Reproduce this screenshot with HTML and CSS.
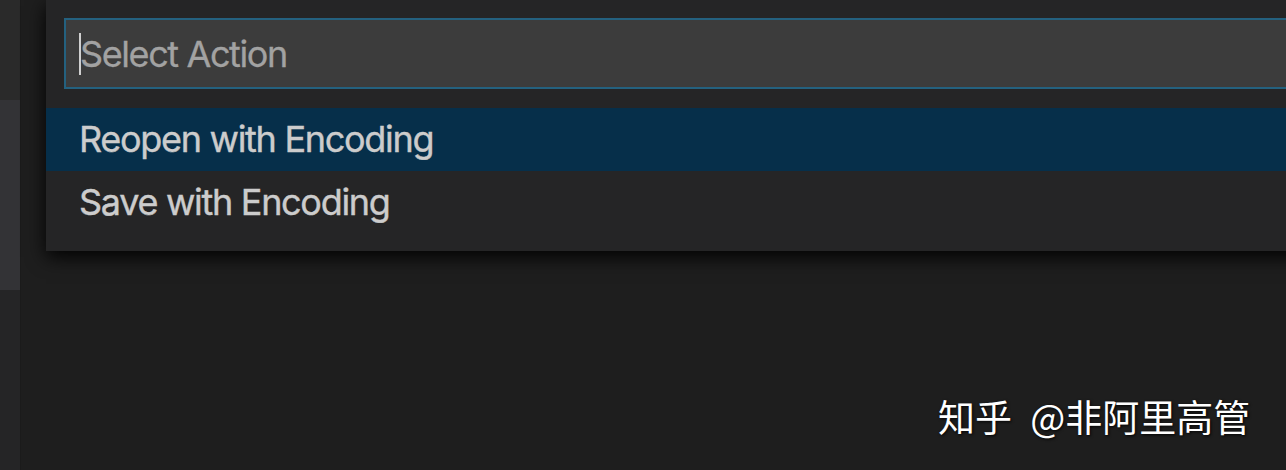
FILE: index.html
```html
<!DOCTYPE html>
<html>
<head>
<meta charset="utf-8">
<link rel="stylesheet" href="styles.css">
</head>
<body>
<div class="app">
  <div class="sidebar">
    <div class="side-top"></div>
    <div class="side-mid"></div>
    <div class="side-bottom"></div>
  </div>
  <div class="editor"></div>
</div>
<div class="quick-pick">
  <div class="input-box">
    <span class="cursor"></span><span class="placeholder">Select Action</span>
  </div>
  <div class="list">
    <div class="item selected">Reopen with Encoding</div>
    <div class="item">Save with Encoding</div>
  </div>
</div>
<div class="watermark">知乎 @非阿里高管</div>
</body>
</html>
```
FILE: styles.css
```css
html, body {
  margin: 0;
  padding: 0;
}
body {
  width: 1286px;
  height: 470px;
  overflow: hidden;
  background: #1e1e1e;
  font-family: Inter, "Noto Sans", sans-serif;
  position: relative;
}
.app {
  display: flex;
  height: 470px;
}
.sidebar {
  width: 20px;
  display: flex;
  flex-direction: column;
  border-right: 1px solid #1b1b1b;
}
.side-top {
  height: 100px;
  background: #2a2a2a;
}
.side-mid {
  height: 190px;
  background: #333336;
}
.side-bottom {
  flex: 1;
  background: #252526;
}
.editor {
  flex: 1;
  background: #1e1e1e;
}
.quick-pick {
  position: absolute;
  left: 46px;
  top: 0;
  width: 1300px;
  height: 251px;
  background: #252526;
  box-shadow: 0 6px 18px rgba(0, 0, 0, 0.95);
  padding-top: 18px;
  box-sizing: border-box;
}
.input-box {
  margin-left: 18px;
  height: 71px;
  box-sizing: border-box;
  border: 2px solid #24617f;
  background: #3c3c3c;
  display: flex;
  align-items: center;
  padding-left: 13px;
}
.cursor {
  width: 2px;
  height: 42px;
  background: #d0d0d0;
}
.placeholder {
  color: #a2a2a2;
  font-size: 36px;
  letter-spacing: -1.4px;
  margin-top: 1px;
  margin-left: -1px;
  -webkit-text-stroke: 0.3px #a2a2a2;
}
.list {
  margin-top: 19px;
}
.item {
  height: 63px;
  line-height: 63px;
  padding-left: 33px;
  color: #cccccc;
  font-size: 36px;
  letter-spacing: -1.3px;
  -webkit-text-stroke: 0.4px #cccccc;
}
.item.selected {
  background: #062f4a;
}
.watermark {
  position: absolute;
  left: 938px;
  top: 392px;
  color: #ffffff;
  font-family: "Noto Sans CJK SC", sans-serif;
  font-size: 37px;
  line-height: 48px;
  word-spacing: 10px;
  text-shadow: 1px 1px 3px rgba(0, 0, 0, 0.9);
}
```
